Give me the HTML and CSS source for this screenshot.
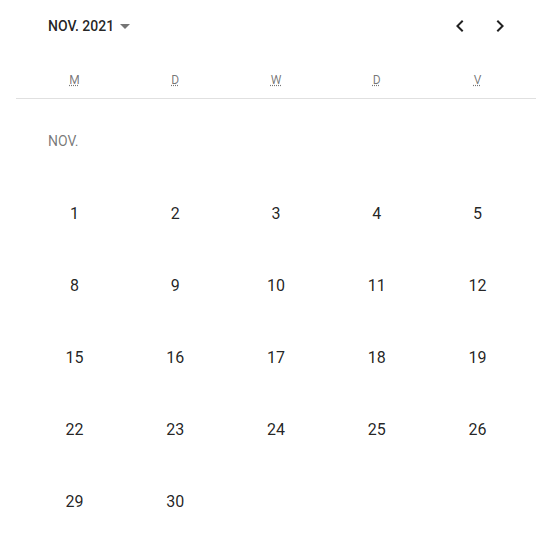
FILE: index.html
```html
<!DOCTYPE html>
<html lang="de">
<head>
    <meta charset="UTF-8">
    <meta name="viewport" content="width=device-width, initial-scale=1.0">
    <title>Kalender</title>
    <link rel="stylesheet" href="styles.css">
</head>
<body>
    <div class="calendar">
        <div class="calendar-header">
            <button class="period-button" type="button">
                <span>NOV. 2021</span>
                <span class="period-arrow"></span>
            </button>
            <div class="spacer"></div>
            <button class="nav-button" type="button" aria-label="Vorheriger Monat">
                <svg viewBox="0 0 24 24" width="24" height="24"><path d="M15.41 7.41L14 6l-6 6 6 6 1.41-1.41L10.83 12z"/></svg>
            </button>
            <button class="nav-button" type="button" aria-label="Nächster Monat">
                <svg viewBox="0 0 24 24" width="24" height="24"><path d="M8.59 16.59L10 18l6-6-6-6-1.41 1.41L13.17 12z"/></svg>
            </button>
        </div>

        <div class="calendar-content">
            <div class="weekdays">
                <abbr title="Montag">M</abbr>
                <abbr title="Dienstag">D</abbr>
                <abbr title="Mittwoch">W</abbr>
                <abbr title="Donnerstag">D</abbr>
                <abbr title="Freitag">V</abbr>
            </div>
            <div class="divider"></div>

            <div class="days">
                <div class="month-label">NOV.</div>
                <div class="day">1</div>
                <div class="day">2</div>
                <div class="day">3</div>
                <div class="day">4</div>
                <div class="day">5</div>
                <div class="day">8</div>
                <div class="day">9</div>
                <div class="day">10</div>
                <div class="day">11</div>
                <div class="day">12</div>
                <div class="day">15</div>
                <div class="day">16</div>
                <div class="day">17</div>
                <div class="day">18</div>
                <div class="day">19</div>
                <div class="day">22</div>
                <div class="day">23</div>
                <div class="day">24</div>
                <div class="day">25</div>
                <div class="day">26</div>
                <div class="day">29</div>
                <div class="day">30</div>
            </div>
        </div>
    </div>
</body>
</html>
```

FILE: styles.css
```css
body {
    font-family: Roboto, "Liberation Sans", sans-serif;
    margin: 0;
    padding: 0;
    background: #fff;
    color: rgba(0, 0, 0, 0.87);
}
.calendar {
    width: 520px;
    margin-left: 16px;
}
.calendar-header {
    display: flex;
    align-items: center;
    height: 52px;
    padding: 0 16px 0 16px;
}
.spacer {
    flex: 1;
}
.period-button {
    display: flex;
    align-items: center;
    height: 36px;
    padding: 0 16px;
    border: 0;
    background: none;
    font-family: inherit;
    font-size: 14px;
    font-weight: 500;
    color: rgba(0, 0, 0, 0.87);
    cursor: pointer;
}
.period-arrow {
    width: 0;
    height: 0;
    margin-left: 6px;
    margin-top: 1px;
    border-left: 5px solid transparent;
    border-right: 5px solid transparent;
    border-top: 5px solid rgba(0, 0, 0, 0.54);
}
.nav-button {
    width: 40px;
    height: 40px;
    border: 0;
    padding: 0;
    background: none;
    display: flex;
    align-items: center;
    justify-content: center;
    cursor: pointer;
}
.nav-button svg {
    fill: rgba(0, 0, 0, 0.87);
}
.calendar-content {
    padding: 0 8px;
}
.weekdays {
    display: grid;
    grid-template-columns: repeat(5, 1fr);
    margin-top: 20px;
    height: 26px;
    font-size: 12px;
    line-height: 16px;
    color: rgba(0, 0, 0, 0.54);
    text-align: center;
}
.weekdays abbr {
    text-decoration: underline dotted;
}
.divider {
    height: 1px;
    background: rgba(0, 0, 0, 0.12);
    margin: 0 -8px 6px -8px;
}
.days {
    display: grid;
    grid-template-columns: repeat(5, 1fr);
    grid-auto-rows: 72px;
    font-size: 16px;
}
.month-label {
    grid-column: 1 / -1;
    display: flex;
    align-items: center;
    padding-left: 24px;
    font-size: 14px;
    color: rgba(0, 0, 0, 0.54);
}
.day {
    display: flex;
    align-items: center;
    justify-content: center;
}
```
